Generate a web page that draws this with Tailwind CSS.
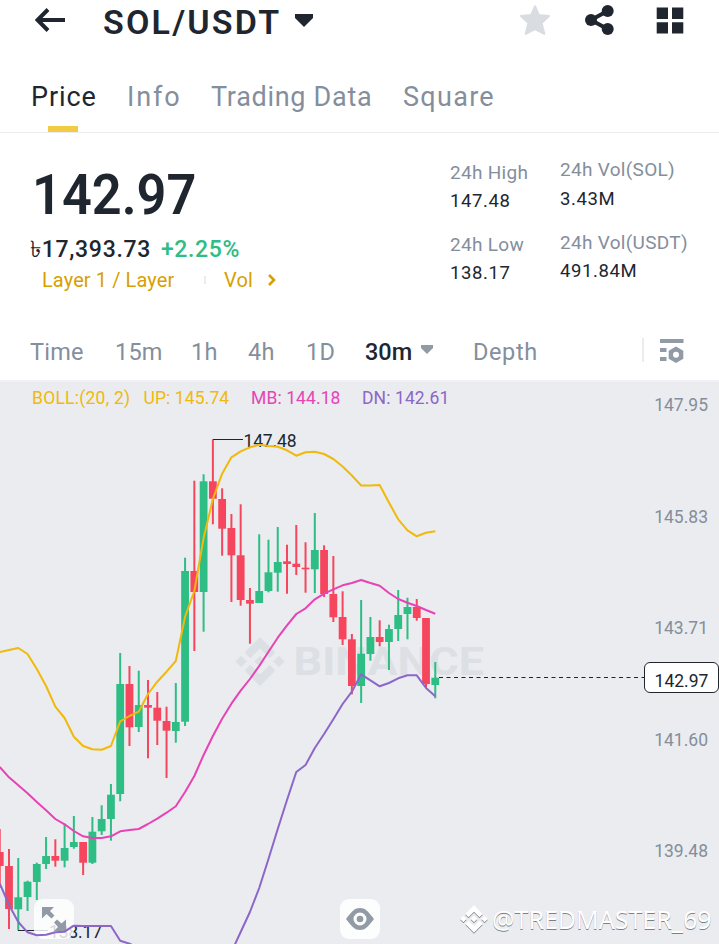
<!DOCTYPE html>
<html lang="en">
  <head>
    <meta charset="utf-8" />
    <title>SOL/USDT</title>
    <meta name="viewport" content="width=device-width, initial-scale=1" />
    <script src="https://cdn.jsdelivr.net/npm/@tailwindcss/browser@4"></script>
  </head>
  <body class="bg-white">
    <div
      class="flex flex-col w-[719px] h-[944px] overflow-hidden whitespace-nowrap text-[#202630] font-['Roboto','Liberation_Sans',sans-serif]"
    >
      <header class="flex items-center h-10 pl-[35px] pr-[35px]">
        <svg class="w-[30px] h-6 mr-[38px]" viewBox="0 0 30 24" fill="none" stroke="#202630" stroke-width="4">
          <path d="M30 12H3M13 1.5L2.5 12L13 22.5" />
        </svg>
        <h1 class="w-[192px] pt-1 text-[34px] leading-9 font-semibold tracking-[2.2px]">SOL/USDT</h1>
        <svg class="w-[18px] h-[13px]" viewBox="0 0 18 13" fill="#202630">
          <path d="M0 0H18V4L9 13L0 4Z" />
        </svg>
        <div class="flex-grow"></div>
        <svg class="w-[30px] h-[30px] mr-[35px]" viewBox="0 0 30 30" fill="#d9dce1" stroke="#d9dce1" stroke-width="2" stroke-linejoin="round">
          <path d="M15 1.2L18.8 10L29 11L21.6 18L24.3 28.8L15 24L5.7 28.8L8.4 18L1 11L11.2 10Z" />
        </svg>
        <svg class="w-[29px] h-[30px] mr-[42px]" viewBox="0 0 29 30" fill="#202630">
          <path d="M6 15L22.5 6M6 15L22.5 24" stroke="#202630" stroke-width="4" />
          <circle cx="6" cy="15" r="6" />
          <circle cx="22.7" cy="6" r="6" />
          <circle cx="22.7" cy="24" r="6" />
        </svg>
        <svg class="w-7 h-[27px]" viewBox="0 0 28 27" fill="#202630">
          <path d="M.7 .5H12V12H.7ZM16 .5H27.300V12H16ZM.7 15.300H12V26.500H.7ZM16 15.300H27.300V26.500H16Z" />
        </svg>
      </header>

      <nav class="flex h-[93px] pl-[31px] pt-[39px] border-b border-[#eaecef] text-[27px] leading-9 text-[#848e9c] tracking-[0.6px]">
        <div class="relative w-[96px] text-[#202630] tracking-[0.9px]">
          Price
          <div class="absolute left-[17px] bottom-0 w-[30px] h-[6px] bg-[#f3ca43]"></div>
        </div>
        <div class="w-[84px] tracking-[1.9px]">Info</div>
        <div class="w-[192px] tracking-[0.7px]">Trading Data</div>
        <div class="tracking-[1.3px]">Square</div>
      </nav>

      <section class="flex h-[187px]">
        <div class="w-[450px] pt-[31px]">
          <div class="w-[175px] pl-8 text-[56px] leading-[62px] font-semibold origin-[32px_50%] scale-x-[.935]">142.97</div>
          <div class="flex pt-[9px] pl-[30px] text-[23px] leading-[30px] font-medium">
            <div class="w-[131px] tracking-[0.7px]">৳17,393.73</div>
            <div class="text-[#2ebd85] tracking-[0.6px]">+2.25%</div>
          </div>
          <div class="flex items-center pl-[42px] -mt-px text-[20px] leading-8 text-[#d89f00] tracking-[0.1px]">
            <div class="w-[162px]">Layer 1 / Layer</div>
            <div class="w-[20px]"><div class="w-0.5 h-2 bg-[#eaecef]"></div></div>
            <div class="w-[44px]">Vol</div>
            <svg class="w-2 h-3" viewBox="0 0 8 12" fill="none" stroke="#d89f00" stroke-width="2.6">
              <path d="M1 1L6 6L1 11" />
            </svg>
          </div>
        </div>
        <div class="w-[110px] pt-[26px] text-[19px] leading-7 tracking-[0.3px]">
          <div class="text-[#848e9c]">24h High</div>
          <div class="text-[18.5px] tracking-[0.6px]">147.48</div>
          <div class="pt-4 text-[#848e9c]">24h Low</div>
          <div class="text-[18.5px] tracking-[0.6px]">138.17</div>
        </div>
        <div class="pt-[23px] text-[19px] leading-7 tracking-[0.3px]">
          <div class="text-[#848e9c]">24h Vol(SOL)</div>
          <div class="pt-[1px] text-[18.5px] tracking-[0.6px]">3.43M</div>
          <div class="pt-4 text-[#848e9c]">24h Vol(USDT)</div>
          <div class="text-[18.5px] tracking-[0.6px]">491.84M</div>
        </div>
      </section>

      <section class="flex items-center h-[60px] pl-[30px] pt-[5px] text-[23.5px] text-[#848e9c] tracking-[0.2px]">
        <div class="w-[85px]">Time</div>
        <div class="w-[76px]">15m</div>
        <div class="w-[57px]">1h</div>
        <div class="w-[58px]">4h</div>
        <div class="w-[59px]">1D</div>
        <div class="w-[56px] font-medium text-[#202630] tracking-normal">30m</div>
        <svg class="w-3 h-[9px] mr-[40px] -mt-[6px]" viewBox="0 0 12 9" fill="#929aa5">
          <path d="M0 0H12V3L6 9L0 3Z" />
        </svg>
        <div class="w-[169px] tracking-[0.6px]">Depth</div>
        <div class="w-[18px] h-6 -mt-[5px] border-l-2 border-[#eaecef]"></div>
        <svg class="w-6 h-6 -mt-[4px]" viewBox="0 0 24 24" fill="#929aa5">
          <path d="M0 0H23.500V4H0ZM0 9H6.500V13H0ZM0 18H6.500V22H0Z" />
          <path fill-rule="evenodd" d="M16 7.500L23.300 11.700V19.800L16 24L8.700 19.800V11.700ZM16 12.800A3 3 0 1 0 16 18.800A3 3 0 1 0 16 12.800Z" />
        </svg>
      </section>

      <main class="relative h-[564px] bg-[#eaecef] border-t-2 border-[#f1f2f4]">
        <svg class="absolute left-0 -top-0.5 w-[719px] h-[564px]" viewBox="0 380 719 564">
          <g fill="#dce0e4">
            <path d="M260 637L275.500 652.500L269.800 658.200L260 648.400L250.200 658.200L244.500 652.500Z" />
            <path d="M260 686L275.500 670.500L269.800 664.800L260 674.600L250.200 664.800L244.500 670.500Z" />
            <path d="M260 655.800L265.700 661.500L260 667.200L254.300 661.500ZM241 655.800L246.700 661.500L241 667.200L235.300 661.500ZM279 655.800L284.700 661.500L279 667.200L273.300 661.500Z" />
            <text x="293.500" y="675" textLength="190.500" font-size="38" font-weight="700" lengthAdjust="spacingAndGlyphs">BINANCE</text>
          </g>
          <g id="candles"></g>
          <path d="M213 439.500H243M18 930.500H48" stroke="#202630" />
          <g font-size="17.500" fill="#202630">
            <text x="243.500" y="447" textLength="53">147.48</text>
            <text x="49" y="938" textLength="53">138.17</text>
          </g>
          <rect x="34" y="899" width="40" height="40" rx="9" fill="#fff" fill-opacity=".82" />
          <path d="M42 907H54L50 911L54.500 915.500L51.500 918.500L46.500 914L42 918.500ZM66 931H54L58 927L54 922.500L57 919.500L61.500 923.500L66 919.500Z" fill="#929aa5" />
          <g id="bands" fill="none" stroke-width="2" stroke-linejoin="round"></g>
          <path d="M439 677.500H645" stroke="#202630" stroke-dasharray="4 3.500" />
          <rect x="340" y="899" width="40" height="40" rx="9" fill="#fcfdfd" />
          <path fill-rule="evenodd" d="M346 919C352 911 355 908 360 908S368 911 374 919C368 927 365 930 360 930S352 927 346 919ZM360 912.500A6.500 6.500 0 1 0 360 925.500A6.500 6.500 0 1 0 360 912.500Z" fill="#929aa5" />
          <circle cx="360" cy="919" r="3.300" fill="#929aa5" />
        </svg>

        <div class="flex pl-8 pt-[4px] text-[17.5px] leading-6 text-[#f0b90b] tracking-[0.1px]">
          <div class="w-[111.5px] tracking-[0.25px]">BOLL:(20, 2)</div>
          <div class="w-[107.5px]">UP: 145.74</div>
          <div class="w-[111px] text-[#e843b5]">MB: 144.18</div>
          <div class="text-[#8c66c8]">DN: 142.61</div>
        </div>

        <div class="absolute right-[11px] top-[11px] flex flex-col gap-[87.5px] text-[17.5px] leading-6 text-right text-[#848e9c]">
          <div>147.95</div>
          <div>145.83</div>
          <div>143.71</div>
          <div>141.60</div>
          <div>139.48</div>
        </div>
        <div class="absolute right-0 top-[280px] flex items-center justify-center w-[75px] h-[31px] pt-[7px] bg-white border border-[#202630] rounded-md text-[17.5px]">
          142.97
        </div>

        <div class="absolute right-[10px] bottom-[9px] flex items-center gap-1 text-white">
          <svg class="w-7 h-7 drop-shadow-[0_1px_0_#7b818b]" viewBox="0 0 50 50" fill="#fff">
            <path d="M25 .5L40.500 16L34.800 21.700L25 11.900L15.200 21.700L9.500 16ZM25 49.500L40.500 34L34.800 28.300L25 38.100L15.200 28.300L9.500 34Z" />
            <path d="M25 19.300L30.700 25L25 30.700L19.300 25ZM6 19.300L11.700 25L6 30.700L.3 25ZM44 19.300L49.700 25L44 30.700L38.300 25Z" />
          </svg>
          <div class="w-[217px] text-[25px] leading-8 font-['Noto_Sans',sans-serif] [text-shadow:0_1px_0_#7b818b]">@TREDMASTER_69</div>
        </div>
      </main>
    </div>

    <script>
      const firstX = 9;
      const step = 9.267;
      const svgNode = (name, attributes, parent) => {
        const node = document.createElementNS('http://www.w3.org/2000/svg', name);
        Object.keys(attributes).forEach(key => {
          node.setAttribute(key, attributes[key]);
        });
        parent.appendChild(node);
      };

      // direction, high, body top, body bottom, low
      const candles = [
        ['r', 829, 852, 866, 888],
        ['r', 849, 866, 909, 929],
        ['g', 858, 897.3, 909.3, 930.5],
        ['g', 880.7, 881.7, 897, 911],
        ['g', 862.7, 864, 882, 900],
        ['g', 837, 856, 864, 869],
        ['r', 839.3, 856, 860.7, 866.7],
        ['g', 823.7, 848, 860.7, 867.3],
        ['g', 816, 842, 847, 848.7],
        ['r', 842, 842, 862.7, 875],
        ['g', 817, 831.7, 862.7, 864],
        ['g', 805.3, 819, 831.3, 835],
        ['g', 784, 794.7, 819, 840.7],
        ['g', 653, 684, 794, 801.3],
        ['r', 666, 684, 727.3, 746],
        ['g', 670.7, 705, 727, 732],
        ['r', 680, 705, 707.7, 758.3],
        ['r', 692, 707.7, 720.7, 745],
        ['r', 706.7, 721, 730.7, 778],
        ['g', 683, 722, 731, 742.7],
        ['g', 557.7, 571, 721.7, 726],
        ['r', 480.7, 571, 592, 651],
        ['g', 474.3, 481.3, 592, 631.7],
        ['r', 439.3, 481.3, 498.7, 524.3],
        ['r', 488.3, 499, 528.7, 555.7],
        ['r', 514, 528, 555.3, 602],
        ['r', 504.3, 555.3, 600, 605.7],
        ['r', 588, 600, 603.7, 643.7],
        ['g', 534.3, 591, 603, 603],
        ['g', 539.7, 572.3, 591, 592.3],
        ['g', 527, 562, 572.7, 591.7],
        ['r', 544.7, 561.3, 564, 593.7],
        ['r', 525, 563.7, 567, 575],
        ['r', 542.3, 567.7, 569.3, 592.7],
        ['g', 513, 550, 569.3, 593],
        ['r', 545.3, 550, 594, 597],
        ['r', 556, 594, 617.3, 622],
        ['r', 591.3, 617, 639.3, 645],
        ['r', 634, 639.3, 686, 694.3],
        ['g', 600, 653.7, 686, 703],
        ['g', 617, 637, 654, 660.7],
        ['r', 620.3, 637, 642, 646.3],
        ['g', 624.7, 629, 642, 670],
        ['g', 590, 615, 629, 641],
        ['g', 597.7, 607, 614, 639.3],
        ['r', 599, 607, 618, 620.7],
        ['r', 618, 618, 684, 687.3],
        ['g', 662, 677.7, 685, 698.3],
      ];
      const candleLayer = document.querySelector('#candles');
      candles.forEach(([direction, high, top, bottom, low], index) => {
        const x = firstX + (index - 1) * step;
        const fill = direction === 'g' ? '#2ebd85' : '#f6465d';
        svgNode('rect', { x: x - 1, y: high, width: 2, height: low - high, fill }, candleLayer);
        svgNode('rect', { x: x - 3.9, y: top, width: 7.8, height: bottom - top, fill }, candleLayer);
      });

      // one value per candle, starting at the left edge
      const bands = {
        '#f0b90b': [652, 650, 648, 654, 669, 686, 706.7, 718, 736.7, 746, 749.3, 749.7, 746, 721.3, 716, 711.7, 694, 681.7, 671.7, 661, 616.7, 591, 538, 499, 473.7, 457.3, 451.3, 447.3, 444.8, 446, 446.7, 450.3, 455.7, 452.3, 451.7, 454, 459, 466.5, 475.5, 485.5, 485.5, 485, 502.5, 519.3, 530.3, 536.3, 532.7, 531.3],
        '#e843b5': [767, 777.3, 785.3, 793.3, 802, 810.3, 819, 824.3, 831, 836.3, 838, 838, 836.3, 831.3, 830, 829, 824, 818.7, 812.7, 806.3, 792, 776, 755, 736, 718.7, 703.7, 690.7, 679, 666, 651.7, 637.7, 625.3, 614, 608.3, 599.3, 593.7, 589.3, 585.3, 583, 580, 583, 585.7, 593, 599, 602.7, 606, 610, 613.7],
        '#8c66c8': [883.3, 905, 922, 932.3, 935.3, 934.7, 932.3, 931.7, 925.7, 926, 926, 926, 926, 940.7, 943.7, 948, 955, 962, 970, 975, 980, 980, 978, 972, 965, 952, 932, 912, 888, 859, 829, 800, 772, 765, 748, 734, 719.3, 704, 691.7, 674.3, 680.3, 686.3, 683, 678.3, 675.3, 675.3, 688, 696.3],
      };
      const bandLayer = document.querySelector('#bands');
      Object.keys(bands).forEach(stroke => {
        const points = bands[stroke]
          .map((y, index) => `${firstX + (index - 1) * step},${y}`)
          .join(' ');
        svgNode('polyline', { points, stroke }, bandLayer);
      });
    </script>
  </body>
</html>
